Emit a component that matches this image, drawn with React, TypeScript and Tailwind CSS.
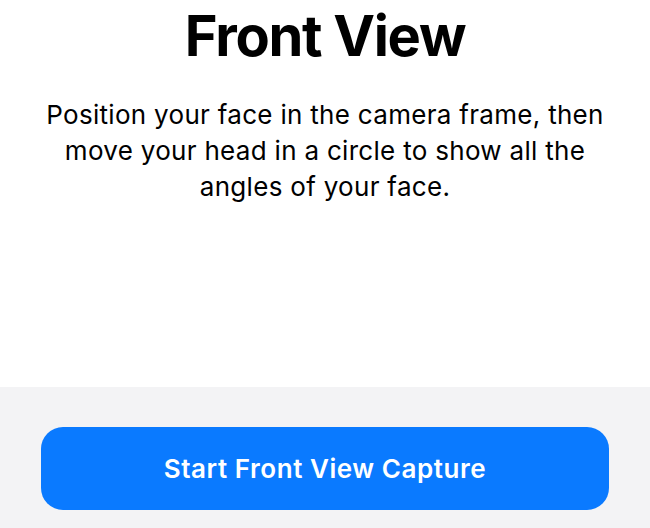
import React from "react";

export default function App() {
  return (
    <div className="w-[650px] h-[528px] flex flex-col bg-white" style={{ fontFamily: "Inter, 'Noto Sans', sans-serif" }}>
      <div className="flex-1 flex flex-col items-center pt-[3px]">
        <h1 className="text-[56px] leading-[67px] font-bold text-black tracking-[-1.3px]">Front View</h1>
        <p className="mt-[27px] px-[36px] text-center text-[26px] leading-[36px] tracking-[0.3px] text-black">
          Position your face in the camera frame, then move your head in a circle to show all the angles of your face.
        </p>
      </div>
      <div className="h-[141px] bg-[#f3f3f5] px-[41px] pt-[40px]">
        <button className="w-full h-[83px] rounded-[22px] bg-[#0a7aff] text-white text-[26px] tracking-[0.55px] font-semibold flex items-center justify-center">
          Start Front View Capture
        </button>
      </div>
    </div>
  );
}
